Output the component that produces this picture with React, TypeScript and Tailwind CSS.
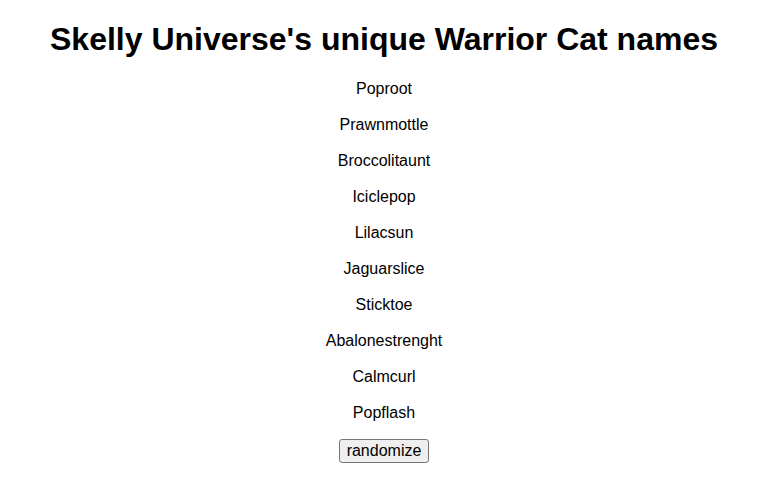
export default function App() {
  const names = [
    "Poproot",
    "Prawnmottle",
    "Broccolitaunt",
    "Iciclepop",
    "Lilacsun",
    "Jaguarslice",
    "Sticktoe",
    "Abalonestrenght",
    "Calmcurl",
    "Popflash",
  ];
  return (
    <div className="block text-center text-black bg-white min-h-[480px] pt-px" style={{ fontFamily: '"Liberation Sans", Arial, sans-serif' }}>
      <h1 className="text-[32px] font-bold leading-[37px] mt-[20px] mb-[21px]">
        Skelly Universe's unique Warrior Cat names
      </h1>
      {names.map((n) => (
        <p key={n} className="text-base leading-5 my-4">
          {n}
        </p>
      ))}
      <button className="align-top text-base leading-[18px] px-[7px] py-[2px] bg-[#efefef] border border-[#767676] rounded-[3px]">
        randomize
      </button>
    </div>
  );
}
